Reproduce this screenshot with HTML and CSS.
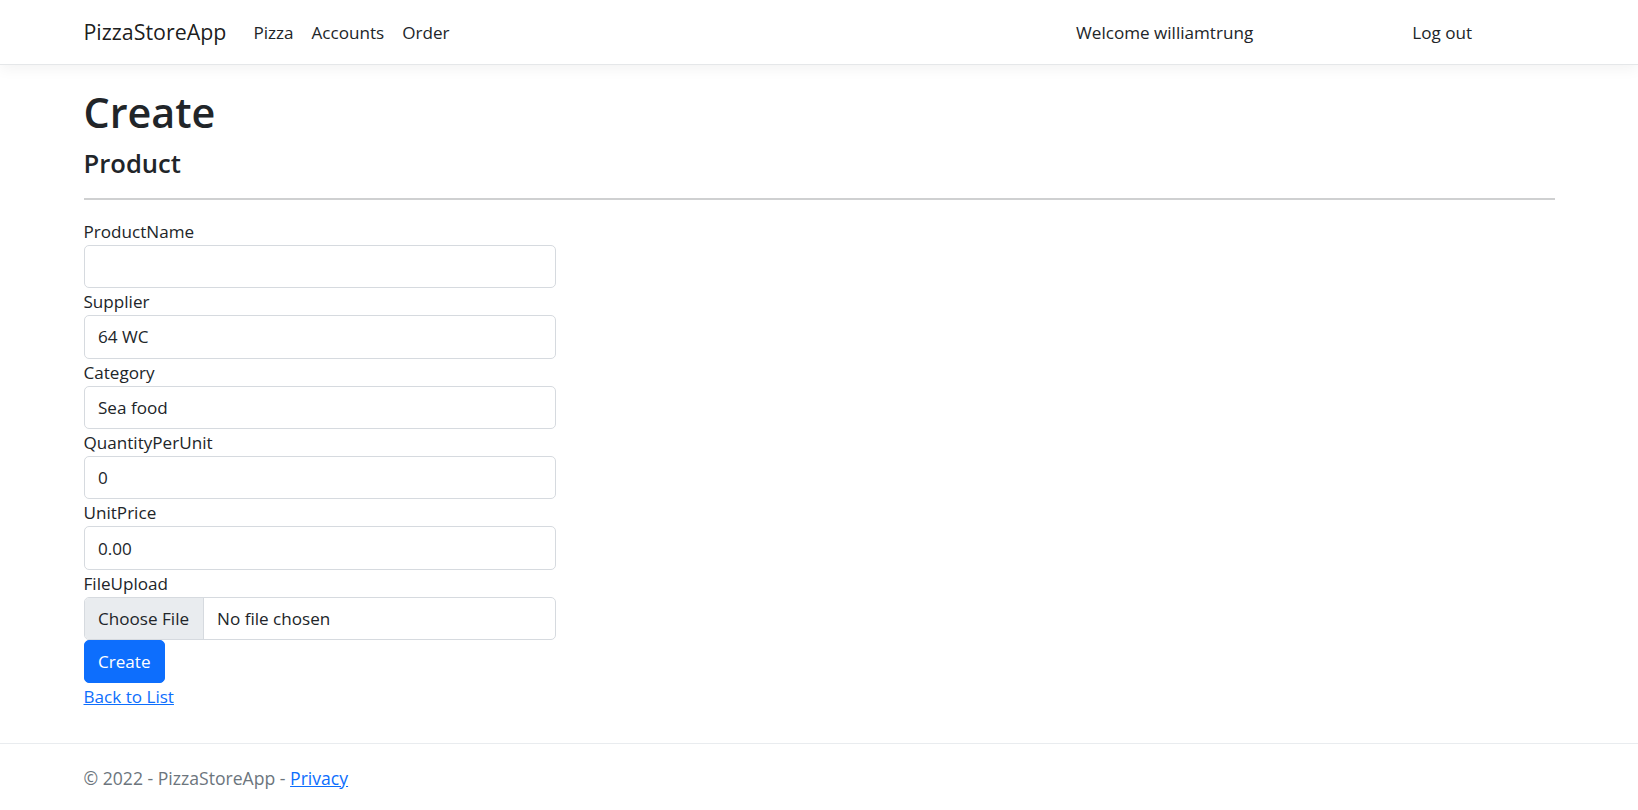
FILE: index.html
```html
<!DOCTYPE html>
<html lang="en">
<head>
  <meta charset="utf-8" />
  <meta name="viewport" content="width=device-width, initial-scale=1.0" />
  <title>Create - PizzaStoreApp</title>
  <link rel="stylesheet" href="styles.css">
</head>
<body>
  <header>
    <nav class="navbar">
      <div class="container navbar-inner">
        <a class="navbar-brand" href="#">PizzaStoreApp</a>
        <ul class="navbar-nav nav-main">
          <li class="nav-item"><a class="nav-link" href="#">Pizza</a></li>
          <li class="nav-item"><a class="nav-link" href="#">Accounts</a></li>
          <li class="nav-item"><a class="nav-link" href="#">Order</a></li>
        </ul>
        <ul class="navbar-nav nav-user">
          <li class="nav-item"><a class="nav-link" href="#">Welcome williamtrung</a></li>
          <li class="nav-item"><a class="nav-link logout" href="#">Log out</a></li>
        </ul>
      </div>
    </nav>
  </header>

  <main class="container page">
    <h1>Create</h1>
    <h4>Product</h4>
    <hr />
    <div class="form-col">
      <form>
        <div class="form-group">
          <label class="control-label" for="ProductName">ProductName</label>
          <input class="form-control" id="ProductName" type="text" value="" />
        </div>
        <div class="form-group">
          <label class="control-label" for="Supplier">Supplier</label>
          <input class="form-control" id="Supplier" type="text" value="64 WC" />
        </div>
        <div class="form-group">
          <label class="control-label" for="Category">Category</label>
          <input class="form-control" id="Category" type="text" value="Sea food" />
        </div>
        <div class="form-group">
          <label class="control-label" for="QuantityPerUnit">QuantityPerUnit</label>
          <input class="form-control" id="QuantityPerUnit" type="text" value="0" />
        </div>
        <div class="form-group">
          <label class="control-label" for="UnitPrice">UnitPrice</label>
          <input class="form-control" id="UnitPrice" type="text" value="0.00" />
        </div>
        <div class="form-group">
          <label class="control-label" for="FileUpload">FileUpload</label>
          <label class="form-control file-control" for="FileUpload">
            <span class="file-btn">Choose File</span>
            <span class="file-name">No file chosen</span>
          </label>
          <input class="file-hidden" id="FileUpload" type="file" />
        </div>
        <div class="form-group">
          <button type="button" class="btn btn-primary">Create</button>
        </div>
      </form>
    </div>
    <div class="back">
      <a href="#">Back to List</a>
    </div>
  </main>

  <footer class="footer">
    <div class="container">
      &copy; 2022 - PizzaStoreApp - <a href="#">Privacy</a>
    </div>
  </footer>
</body>
</html>
```

FILE: styles.css
```css
* {
  box-sizing: border-box;
}
html, body {
  margin: 0;
  padding: 0;
}
body {
  min-height: 100vh;
  display: flex;
  flex-direction: column;
  background: #fff;
  color: #212529;
  font-family: "Segoe UI", "Open Sans", "Noto Sans", sans-serif;
  font-size: 17.1px;
  line-height: 27px;
}
a {
  color: #0d6efd;
}
ul {
  list-style: none;
  margin: 0;
  padding: 0;
}

.container {
  width: 100%;
  max-width: 1498px;
  margin: 0 auto;
  padding: 0 13.5px;
}

/* top bar */
.navbar {
  background: #fff;
  border-bottom: 1px solid #e5e7e9;
  box-shadow: 0 4.5px 13.5px rgba(0, 0, 0, 0.05);
  padding: 9.5px 0;
}
.navbar-inner {
  display: flex;
  align-items: center;
}
.navbar-brand {
  color: rgba(0, 0, 0, 0.9);
  text-decoration: none;
  font-size: 21.4px;
  line-height: 34px;
  padding: 5.5px 0;
  margin-right: 18px;
}
.navbar-nav {
  display: flex;
}
.nav-main {
  flex: 1;
}
.nav-link {
  display: block;
  padding: 9px;
  color: #212529;
  text-decoration: none;
}
.nav-user {
  padding-right: 73.5px;
}
.nav-link.logout {
  margin-left: 141px;
}

/* page */
.page {
  padding-top: 19.5px;
}
h1 {
  margin: 0 0 9px;
  font-size: 41.3px;
  font-weight: 600;
  line-height: 54px;
}
h4 {
  margin: 0 0 9px;
  font-size: 25.6px;
  font-weight: 600;
  line-height: 32.4px;
}
hr {
  margin: 18px 0;
  border: 0;
  border-top: 2px solid #cfd0d1;
}

.form-col {
  width: 472px;
}
.control-label {
  display: inline-block;
}
.form-control {
  display: block;
  width: 100%;
  height: 43.4px;
  padding: 6.75px 13.5px;
  font: inherit;
  color: #212529;
  background: #fff;
  border: 1px solid #d6dadf;
  border-radius: 5px;
  outline: none;
}
.file-control {
  display: flex;
  align-items: center;
  padding: 0;
  overflow: hidden;
  cursor: pointer;
}
.file-btn {
  align-self: stretch;
  display: flex;
  align-items: center;
  padding: 0 13.5px;
  background: #e9ecef;
  border-right: 1px solid #d6dadf;
}
.file-name {
  padding-left: 13.5px;
}
.file-hidden {
  display: none;
}

.btn {
  display: inline-block;
  padding: 6.75px 13.5px;
  font: inherit;
  line-height: 27px;
  border: 1px solid transparent;
  border-radius: 5px;
  cursor: pointer;
}
.btn-primary {
  color: #fff;
  background: #0d6efd;
  border-color: #0d6efd;
}
.form-group {
  line-height: 27px;
}
.form-group .btn {
  vertical-align: top;
}

/* footer */
.footer {
  margin-top: auto;
  padding-top: 3px;
  border-top: 1px solid #e9ecef;
  font-size: 17.6px;
  line-height: 63.5px;
  color: #6c757d;
}
```
